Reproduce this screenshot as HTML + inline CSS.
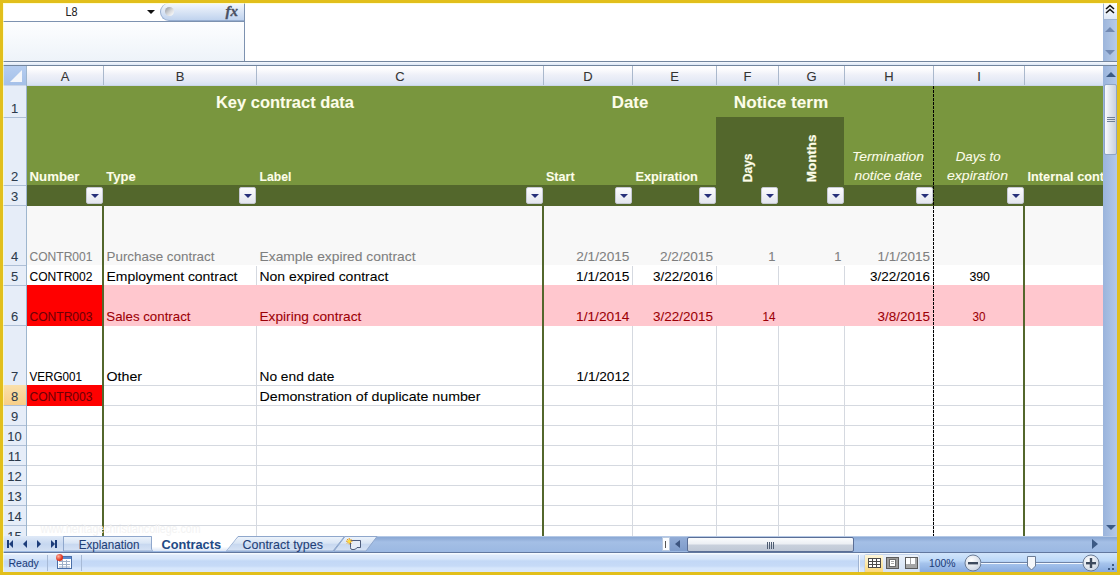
<!DOCTYPE html>
<html><head><meta charset="utf-8">
<style>
*{margin:0;padding:0;box-sizing:border-box}
html,body{width:1120px;height:575px;overflow:hidden;background:#e2bf1c;font-family:"Liberation Sans",sans-serif;position:relative}
.a{position:absolute}
.dd{position:absolute;width:17px;height:17px;border-radius:2px;background:linear-gradient(#fbfbfd,#e4e6ee);border:1px solid #c5c8d2}
.dd:after{content:"";position:absolute;left:4px;top:6px;border-left:4px solid transparent;border-right:4px solid transparent;border-top:4px solid #27307a}
</style></head><body>
<div class="a" style="left:3px;top:3px;width:1100px;height:58px;background:#fff"></div>
<div class="a" style="left:3px;top:22px;width:241px;height:39px;background:linear-gradient(#fdfeff,#eef3f9)"></div>
<div class="a" style="left:3px;top:21px;width:241px;height:1px;background:#7d92b0"></div>
<div class="a" style="left:244px;top:3px;width:1px;height:58px;background:#7d92b0"></div>
<div class="a" style="left:147px;top:10px;width:0;height:0;border-left:4px solid transparent;border-right:4px solid transparent;border-top:4px solid #111"></div>
<div class="a" style="left:160px;top:3px;width:84px;height:18px;border-radius:10px 0 0 10px;background:linear-gradient(#f5f8fd,#c0d3ee);border:1px solid #97aed0;border-right:none;border-top:none"></div>
<div class="a" style="left:165px;top:7px;width:9px;height:9px;border-radius:50%;background:linear-gradient(135deg,#9ca0a8 10%,#d8dadd 55%,#fafafa 90%)"></div>
<div class="a" style="left:1103px;top:3px;width:14px;height:58px;background:linear-gradient(90deg,#9db6dc,#b7cbe8)"></div>
<div class="a" style="left:1103px;top:3px;width:14px;height:17px;background:linear-gradient(#fdfeff,#dfe8f5);border-left:1px solid #9fb4d3;border-bottom:1px solid #9fb4d3"></div>
<div class="a" style="left:3px;top:61px;width:1114px;height:1px;background:#73869e"></div>
<div class="a" style="left:3px;top:62px;width:1114px;height:3px;background:linear-gradient(#f6f9fd,#dbe6f5)"></div>
<div class="a" style="left:3px;top:65px;width:1114px;height:1px;background:#73869e"></div>
<div class="a" style="left:3px;top:66px;width:1100px;height:20px;background:linear-gradient(#ffffff 0,#fdfdfe 3px,#eef0f8 9px,#e4e9f5 15px,#d6e1f2 19px)"></div>
<div class="a" style="left:3px;top:85px;width:1100px;height:1px;background:#cbd6e8"></div>
<div class="a" style="left:3px;top:66px;width:23px;height:19px;background:linear-gradient(#b5cdf0,#a5c0e8)"></div>
<div class="a" style="left:10px;top:70px;width:0;height:0;border-left:12px solid transparent;border-bottom:12px solid #f4f6fa"></div>
<div class="a" style="left:103px;top:66px;width:1px;height:19px;background:#aab8cc"></div>
<div class="a" style="left:256px;top:66px;width:1px;height:19px;background:#aab8cc"></div>
<div class="a" style="left:543px;top:66px;width:1px;height:19px;background:#aab8cc"></div>
<div class="a" style="left:632px;top:66px;width:1px;height:19px;background:#aab8cc"></div>
<div class="a" style="left:716px;top:66px;width:1px;height:19px;background:#aab8cc"></div>
<div class="a" style="left:778px;top:66px;width:1px;height:19px;background:#aab8cc"></div>
<div class="a" style="left:844px;top:66px;width:1px;height:19px;background:#aab8cc"></div>
<div class="a" style="left:933px;top:66px;width:1px;height:19px;background:#aab8cc"></div>
<div class="a" style="left:1024px;top:66px;width:1px;height:19px;background:#aab8cc"></div>
<div class="a" style="left:1103px;top:66px;width:1px;height:19px;background:#aab8cc"></div>
<div class="a" style="left:3px;top:86px;width:23px;height:450px;background:#e6edf8"></div>
<div class="a" style="left:26px;top:66px;width:1px;height:20px;background:#9eb6ce"></div>
<div class="a" style="left:26px;top:86px;width:1px;height:450px;background:#9eb6ce"></div>
<div class="a" style="left:3px;top:117px;width:23px;height:1px;background:#aebfd6"></div>
<div class="a" style="left:3px;top:185px;width:23px;height:1px;background:#aebfd6"></div>
<div class="a" style="left:3px;top:205px;width:23px;height:1px;background:#aebfd6"></div>
<div class="a" style="left:3px;top:265px;width:23px;height:1px;background:#aebfd6"></div>
<div class="a" style="left:3px;top:285px;width:23px;height:1px;background:#aebfd6"></div>
<div class="a" style="left:3px;top:325px;width:23px;height:1px;background:#aebfd6"></div>
<div class="a" style="left:3px;top:385px;width:23px;height:1px;background:#aebfd6"></div>
<div class="a" style="left:3px;top:385px;width:23px;height:20px;background:linear-gradient(#fae0ab,#f8cf88)"></div>
<div class="a" style="left:3px;top:405px;width:23px;height:1px;background:#aebfd6"></div>
<div class="a" style="left:3px;top:425px;width:23px;height:1px;background:#aebfd6"></div>
<div class="a" style="left:3px;top:445px;width:23px;height:1px;background:#aebfd6"></div>
<div class="a" style="left:3px;top:465px;width:23px;height:1px;background:#aebfd6"></div>
<div class="a" style="left:3px;top:485px;width:23px;height:1px;background:#aebfd6"></div>
<div class="a" style="left:3px;top:505px;width:23px;height:1px;background:#aebfd6"></div>
<div class="a" style="left:3px;top:525px;width:23px;height:1px;background:#aebfd6"></div>
<div class="a" style="left:3px;top:545px;width:23px;height:1px;background:#aebfd6"></div>
<div class="a" style="left:27px;top:86px;width:1076px;height:450px;background:#fff"></div>
<div class="a" style="left:256px;top:266px;width:1px;height:20px;background:#d5d9e0"></div>
<div class="a" style="left:256px;top:326px;width:1px;height:210px;background:#d5d9e0"></div>
<div class="a" style="left:632px;top:266px;width:1px;height:20px;background:#d5d9e0"></div>
<div class="a" style="left:632px;top:326px;width:1px;height:210px;background:#d5d9e0"></div>
<div class="a" style="left:716px;top:266px;width:1px;height:20px;background:#d5d9e0"></div>
<div class="a" style="left:716px;top:326px;width:1px;height:210px;background:#d5d9e0"></div>
<div class="a" style="left:778px;top:266px;width:1px;height:20px;background:#d5d9e0"></div>
<div class="a" style="left:778px;top:326px;width:1px;height:210px;background:#d5d9e0"></div>
<div class="a" style="left:844px;top:266px;width:1px;height:20px;background:#d5d9e0"></div>
<div class="a" style="left:844px;top:326px;width:1px;height:210px;background:#d5d9e0"></div>
<div class="a" style="left:933px;top:266px;width:1px;height:20px;background:#d5d9e0"></div>
<div class="a" style="left:933px;top:326px;width:1px;height:210px;background:#d5d9e0"></div>
<div class="a" style="left:27px;top:385px;width:1076px;height:1px;background:#d5d9e0"></div>
<div class="a" style="left:27px;top:405px;width:1076px;height:1px;background:#d5d9e0"></div>
<div class="a" style="left:27px;top:425px;width:1076px;height:1px;background:#d5d9e0"></div>
<div class="a" style="left:27px;top:445px;width:1076px;height:1px;background:#d5d9e0"></div>
<div class="a" style="left:27px;top:465px;width:1076px;height:1px;background:#d5d9e0"></div>
<div class="a" style="left:27px;top:485px;width:1076px;height:1px;background:#d5d9e0"></div>
<div class="a" style="left:27px;top:505px;width:1076px;height:1px;background:#d5d9e0"></div>
<div class="a" style="left:27px;top:525px;width:1076px;height:1px;background:#d5d9e0"></div>
<div class="a" style="left:27px;top:206px;width:1076px;height:59px;background:#f8f8f8"></div>
<div class="a" style="left:27px;top:285px;width:1076px;height:41px;background:#ffc7ce"></div>
<div class="a" style="left:27px;top:285px;width:76px;height:41px;background:#ff0000"></div>
<div class="a" style="left:27px;top:385px;width:76px;height:21px;background:#ff0000"></div>
<div class="a" style="left:102px;top:205px;width:2px;height:331px;background:#53672c"></div>
<div class="a" style="left:542px;top:205px;width:2px;height:331px;background:#53672c"></div>
<div class="a" style="left:1023px;top:205px;width:2px;height:331px;background:#53672c"></div>
<div class="a" style="left:27px;top:86px;width:1076px;height:100px;background:#79963e"></div>
<div class="a" style="left:27px;top:185px;width:1076px;height:21px;background:#53672c"></div>
<div class="a" style="left:716px;top:117px;width:128px;height:69px;background:#53672c"></div>
<div class="a" style="left:933px;top:86px;width:1px;height:450px;background:repeating-linear-gradient(#000 0,#000 3px,transparent 3px,transparent 4px)"></div>
<div class="dd" style="left:86px;top:187px"></div>
<div class="dd" style="left:239px;top:187px"></div>
<div class="dd" style="left:526px;top:187px"></div>
<div class="dd" style="left:615px;top:187px"></div>
<div class="dd" style="left:699px;top:187px"></div>
<div class="dd" style="left:761px;top:187px"></div>
<div class="dd" style="left:827px;top:187px"></div>
<div class="dd" style="left:916px;top:187px"></div>
<div class="dd" style="left:1007px;top:187px"></div>
<svg class="a" style="left:0;top:0" width="1120" height="575" font-family="Liberation Sans"><defs><clipPath id="cj"><rect x="0" y="0" width="1103" height="575"/></clipPath><radialGradient id="zg" cx="0.4" cy="0.35" r="0.7"><stop offset="0" stop-color="#ffffff"/><stop offset="1" stop-color="#c9d3e2"/></radialGradient></defs><text x="65.0" y="81" font-size="13" fill="#333" text-anchor="middle" font-weight="normal" font-style="normal" stroke="#333" stroke-width="0.08" >A</text>
<text x="180.0" y="81" font-size="13" fill="#333" text-anchor="middle" font-weight="normal" font-style="normal" stroke="#333" stroke-width="0.08" >B</text>
<text x="400.0" y="81" font-size="13" fill="#333" text-anchor="middle" font-weight="normal" font-style="normal" stroke="#333" stroke-width="0.08" >C</text>
<text x="588.0" y="81" font-size="13" fill="#333" text-anchor="middle" font-weight="normal" font-style="normal" stroke="#333" stroke-width="0.08" >D</text>
<text x="674.5" y="81" font-size="13" fill="#333" text-anchor="middle" font-weight="normal" font-style="normal" stroke="#333" stroke-width="0.08" >E</text>
<text x="747.5" y="81" font-size="13" fill="#333" text-anchor="middle" font-weight="normal" font-style="normal" stroke="#333" stroke-width="0.08" >F</text>
<text x="811.5" y="81" font-size="13" fill="#333" text-anchor="middle" font-weight="normal" font-style="normal" stroke="#333" stroke-width="0.08" >G</text>
<text x="889.0" y="81" font-size="13" fill="#333" text-anchor="middle" font-weight="normal" font-style="normal" stroke="#333" stroke-width="0.08" >H</text>
<text x="979.0" y="81" font-size="13" fill="#333" text-anchor="middle" font-weight="normal" font-style="normal" stroke="#333" stroke-width="0.08" >I</text>
<text x="14.5" y="113" font-size="13" fill="#2c3a4c" text-anchor="middle" font-weight="normal" font-style="normal" stroke="#2c3a4c" stroke-width="0.08" >1</text>
<text x="14.5" y="181" font-size="13" fill="#2c3a4c" text-anchor="middle" font-weight="normal" font-style="normal" stroke="#2c3a4c" stroke-width="0.08" >2</text>
<text x="14.5" y="201" font-size="13" fill="#2c3a4c" text-anchor="middle" font-weight="normal" font-style="normal" stroke="#2c3a4c" stroke-width="0.08" >3</text>
<text x="14.5" y="261" font-size="13" fill="#2c3a4c" text-anchor="middle" font-weight="normal" font-style="normal" stroke="#2c3a4c" stroke-width="0.08" >4</text>
<text x="14.5" y="281" font-size="13" fill="#2c3a4c" text-anchor="middle" font-weight="normal" font-style="normal" stroke="#2c3a4c" stroke-width="0.08" >5</text>
<text x="14.5" y="321" font-size="13" fill="#2c3a4c" text-anchor="middle" font-weight="normal" font-style="normal" stroke="#2c3a4c" stroke-width="0.08" >6</text>
<text x="14.5" y="381" font-size="13" fill="#2c3a4c" text-anchor="middle" font-weight="normal" font-style="normal" stroke="#2c3a4c" stroke-width="0.08" >7</text>
<text x="14.5" y="401" font-size="13" fill="#2c3a4c" text-anchor="middle" font-weight="normal" font-style="normal" stroke="#2c3a4c" stroke-width="0.08" >8</text>
<text x="14.5" y="421" font-size="13" fill="#2c3a4c" text-anchor="middle" font-weight="normal" font-style="normal" stroke="#2c3a4c" stroke-width="0.08" >9</text>
<text x="14.5" y="441" font-size="13" fill="#2c3a4c" text-anchor="middle" font-weight="normal" font-style="normal" stroke="#2c3a4c" stroke-width="0.08" >10</text>
<text x="14.5" y="461" font-size="13" fill="#2c3a4c" text-anchor="middle" font-weight="normal" font-style="normal" stroke="#2c3a4c" stroke-width="0.08" >11</text>
<text x="14.5" y="481" font-size="13" fill="#2c3a4c" text-anchor="middle" font-weight="normal" font-style="normal" stroke="#2c3a4c" stroke-width="0.08" >12</text>
<text x="14.5" y="501" font-size="13" fill="#2c3a4c" text-anchor="middle" font-weight="normal" font-style="normal" stroke="#2c3a4c" stroke-width="0.08" >13</text>
<text x="14.5" y="521" font-size="13" fill="#2c3a4c" text-anchor="middle" font-weight="normal" font-style="normal" stroke="#2c3a4c" stroke-width="0.08" >14</text>
<text x="14.5" y="541" font-size="13" fill="#2c3a4c" text-anchor="middle" font-weight="normal" font-style="normal" stroke="#2c3a4c" stroke-width="0.08" >15</text>
<text x="285" y="108" font-size="17" fill="#fdfde9" text-anchor="middle" font-weight="bold" font-style="normal" textLength="138" lengthAdjust="spacingAndGlyphs" stroke="#fdfde9" stroke-width="0.08" >Key contract data</text>
<text x="630" y="108" font-size="17" fill="#fdfde9" text-anchor="middle" font-weight="bold" font-style="normal" textLength="36.5" lengthAdjust="spacingAndGlyphs" stroke="#fdfde9" stroke-width="0.08" >Date</text>
<text x="781" y="108" font-size="17" fill="#fdfde9" text-anchor="middle" font-weight="bold" font-style="normal" textLength="94.5" lengthAdjust="spacingAndGlyphs" stroke="#fdfde9" stroke-width="0.08" >Notice term</text>
<text x="29.5" y="181" font-size="13" fill="#fdfde9" text-anchor="start" font-weight="bold" font-style="normal" textLength="50" lengthAdjust="spacingAndGlyphs" stroke="#fdfde9" stroke-width="0.08" >Number</text>
<text x="106.3" y="181" font-size="13" fill="#fdfde9" text-anchor="start" font-weight="bold" font-style="normal" textLength="29.3" lengthAdjust="spacingAndGlyphs" stroke="#fdfde9" stroke-width="0.08" >Type</text>
<text x="259.5" y="181" font-size="13" fill="#fdfde9" text-anchor="start" font-weight="bold" font-style="normal" textLength="31.8" lengthAdjust="spacingAndGlyphs" stroke="#fdfde9" stroke-width="0.08" >Label</text>
<text x="546" y="181" font-size="13" fill="#fdfde9" text-anchor="start" font-weight="bold" font-style="normal" textLength="28.6" lengthAdjust="spacingAndGlyphs" stroke="#fdfde9" stroke-width="0.08" >Start</text>
<text x="635.4" y="181" font-size="13" fill="#fdfde9" text-anchor="start" font-weight="bold" font-style="normal" textLength="62.5" lengthAdjust="spacingAndGlyphs" stroke="#fdfde9" stroke-width="0.08" >Expiration</text>
<text x="1027.5" y="181" font-size="13" fill="#fdfde9" text-anchor="start" font-weight="bold" font-style="normal" textLength="100" lengthAdjust="spacingAndGlyphs" stroke="#fdfde9" stroke-width="0.08" clip-path="url(#cj)">Internal contract</text>
<text transform="translate(752.4,182.2) rotate(-90)" font-size="13" font-weight="bold" fill="#fdfde9" textLength="28.7" lengthAdjust="spacingAndGlyphs" stroke="#fdfde9" stroke-width="0.25">Days</text>
<text transform="translate(816.3,182.2) rotate(-90)" font-size="13" font-weight="bold" fill="#fdfde9" textLength="47.6" lengthAdjust="spacingAndGlyphs" stroke="#fdfde9" stroke-width="0.25">Months</text>
<text x="888" y="161" font-size="13" fill="#fdfde9" text-anchor="middle" font-weight="normal" font-style="italic" textLength="72" lengthAdjust="spacingAndGlyphs" stroke="#fdfde9" stroke-width="0.08" >Termination</text>
<text x="888.2" y="180" font-size="13" fill="#fdfde9" text-anchor="middle" font-weight="normal" font-style="italic" textLength="67.2" lengthAdjust="spacingAndGlyphs" stroke="#fdfde9" stroke-width="0.08" >notice date</text>
<text x="978.2" y="161" font-size="13" fill="#fdfde9" text-anchor="middle" font-weight="normal" font-style="italic" textLength="45" lengthAdjust="spacingAndGlyphs" stroke="#fdfde9" stroke-width="0.08" >Days to</text>
<text x="977.5" y="180" font-size="13" fill="#fdfde9" text-anchor="middle" font-weight="normal" font-style="italic" textLength="61" lengthAdjust="spacingAndGlyphs" stroke="#fdfde9" stroke-width="0.08" >expiration</text>
<text x="29.5" y="261" font-size="13" fill="#7f7f7f" text-anchor="start" font-weight="normal" font-style="normal" textLength="63" lengthAdjust="spacingAndGlyphs" stroke="#7f7f7f" stroke-width="0.08" >CONTR001</text>
<text x="106.5" y="261" font-size="13" fill="#7f7f7f" text-anchor="start" font-weight="normal" font-style="normal" textLength="108" lengthAdjust="spacingAndGlyphs" stroke="#7f7f7f" stroke-width="0.08" >Purchase contract</text>
<text x="259.5" y="261" font-size="13" fill="#7f7f7f" text-anchor="start" font-weight="normal" font-style="normal" textLength="156" lengthAdjust="spacingAndGlyphs" stroke="#7f7f7f" stroke-width="0.08" >Example expired contract</text>
<text x="629.5" y="261" font-size="13" fill="#7f7f7f" text-anchor="end" font-weight="normal" font-style="normal" textLength="53.3" lengthAdjust="spacingAndGlyphs" stroke="#7f7f7f" stroke-width="0.08" >2/1/2015</text>
<text x="713" y="261" font-size="13" fill="#7f7f7f" text-anchor="end" font-weight="normal" font-style="normal" textLength="53" lengthAdjust="spacingAndGlyphs" stroke="#7f7f7f" stroke-width="0.08" >2/2/2015</text>
<text x="775.5" y="261" font-size="13" fill="#7f7f7f" text-anchor="end" font-weight="normal" font-style="normal" stroke="#7f7f7f" stroke-width="0.08" >1</text>
<text x="841.5" y="261" font-size="13" fill="#7f7f7f" text-anchor="end" font-weight="normal" font-style="normal" stroke="#7f7f7f" stroke-width="0.08" >1</text>
<text x="930" y="261" font-size="13" fill="#7f7f7f" text-anchor="end" font-weight="normal" font-style="normal" textLength="52.5" lengthAdjust="spacingAndGlyphs" stroke="#7f7f7f" stroke-width="0.08" >1/1/2015</text>
<text x="29.5" y="281" font-size="13" fill="#000" text-anchor="start" font-weight="normal" font-style="normal" textLength="63" lengthAdjust="spacingAndGlyphs" stroke="#000" stroke-width="0.08" >CONTR002</text>
<text x="106.5" y="281" font-size="13" fill="#000" text-anchor="start" font-weight="normal" font-style="normal" textLength="131" lengthAdjust="spacingAndGlyphs" stroke="#000" stroke-width="0.08" >Employment contract</text>
<text x="259.5" y="281" font-size="13" fill="#000" text-anchor="start" font-weight="normal" font-style="normal" textLength="128.8" lengthAdjust="spacingAndGlyphs" stroke="#000" stroke-width="0.08" >Non expired contract</text>
<text x="629.5" y="281" font-size="13" fill="#000" text-anchor="end" font-weight="normal" font-style="normal" textLength="53.5" lengthAdjust="spacingAndGlyphs" stroke="#000" stroke-width="0.08" >1/1/2015</text>
<text x="713" y="281" font-size="13" fill="#000" text-anchor="end" font-weight="normal" font-style="normal" textLength="60" lengthAdjust="spacingAndGlyphs" stroke="#000" stroke-width="0.08" >3/22/2016</text>
<text x="930" y="281" font-size="13" fill="#000" text-anchor="end" font-weight="normal" font-style="normal" textLength="60" lengthAdjust="spacingAndGlyphs" stroke="#000" stroke-width="0.08" >3/22/2016</text>
<text x="979.7" y="281" font-size="13" fill="#000" text-anchor="middle" font-weight="normal" font-style="normal" textLength="20.5" lengthAdjust="spacingAndGlyphs" stroke="#000" stroke-width="0.08" >390</text>
<text x="29.5" y="321" font-size="13" fill="#6e0008" text-anchor="start" font-weight="normal" font-style="normal" textLength="63" lengthAdjust="spacingAndGlyphs" stroke="#6e0008" stroke-width="0.08" >CONTR003</text>
<text x="106.3" y="321" font-size="13" fill="#9c0006" text-anchor="start" font-weight="normal" font-style="normal" textLength="84.2" lengthAdjust="spacingAndGlyphs" stroke="#9c0006" stroke-width="0.08" >Sales contract</text>
<text x="259.5" y="321" font-size="13" fill="#9c0006" text-anchor="start" font-weight="normal" font-style="normal" textLength="101.8" lengthAdjust="spacingAndGlyphs" stroke="#9c0006" stroke-width="0.08" >Expiring contract</text>
<text x="629.5" y="321" font-size="13" fill="#9c0006" text-anchor="end" font-weight="normal" font-style="normal" textLength="53.5" lengthAdjust="spacingAndGlyphs" stroke="#9c0006" stroke-width="0.08" >1/1/2014</text>
<text x="713" y="321" font-size="13" fill="#9c0006" text-anchor="end" font-weight="normal" font-style="normal" textLength="60" lengthAdjust="spacingAndGlyphs" stroke="#9c0006" stroke-width="0.08" >3/22/2015</text>
<text x="775.5" y="321" font-size="13" fill="#9c0006" text-anchor="end" font-weight="normal" font-style="normal" textLength="13" lengthAdjust="spacingAndGlyphs" stroke="#9c0006" stroke-width="0.08" >14</text>
<text x="930" y="321" font-size="13" fill="#9c0006" text-anchor="end" font-weight="normal" font-style="normal" textLength="52.5" lengthAdjust="spacingAndGlyphs" stroke="#9c0006" stroke-width="0.08" >3/8/2015</text>
<text x="979" y="321" font-size="13" fill="#9c0006" text-anchor="middle" font-weight="normal" font-style="normal" textLength="13" lengthAdjust="spacingAndGlyphs" stroke="#9c0006" stroke-width="0.08" >30</text>
<text x="29.5" y="381" font-size="13" fill="#000" text-anchor="start" font-weight="normal" font-style="normal" textLength="52.5" lengthAdjust="spacingAndGlyphs" stroke="#000" stroke-width="0.08" >VERG001</text>
<text x="106.5" y="381" font-size="13" fill="#000" text-anchor="start" font-weight="normal" font-style="normal" textLength="35.5" lengthAdjust="spacingAndGlyphs" stroke="#000" stroke-width="0.08" >Other</text>
<text x="259.5" y="381" font-size="13" fill="#000" text-anchor="start" font-weight="normal" font-style="normal" textLength="74.8" lengthAdjust="spacingAndGlyphs" stroke="#000" stroke-width="0.08" >No end date</text>
<text x="629.6" y="381" font-size="13" fill="#000" text-anchor="end" font-weight="normal" font-style="normal" textLength="53.1" lengthAdjust="spacingAndGlyphs" stroke="#000" stroke-width="0.08" >1/1/2012</text>
<text x="29.5" y="401" font-size="13" fill="#6e0008" text-anchor="start" font-weight="normal" font-style="normal" textLength="63" lengthAdjust="spacingAndGlyphs" stroke="#6e0008" stroke-width="0.08" >CONTR003</text>
<text x="259.5" y="401" font-size="13" fill="#000" text-anchor="start" font-weight="normal" font-style="normal" textLength="221" lengthAdjust="spacingAndGlyphs" stroke="#000" stroke-width="0.08" >Demonstration of duplicate number</text>
<text x="40.5" y="533" font-size="12" fill="#f3f3f3" textLength="160" lengthAdjust="spacingAndGlyphs">www.heritagechristiancollege.com</text></svg>
<div class="a" style="left:3px;top:536px;width:1114px;height:16px;background:linear-gradient(#dfe9f6 0,#8aa8d5 1px,#93afd9 3px,#a4bfe6 6px,#a0bce4 10px,#9bb8e2 16px)"></div>
<div class="a" style="left:3px;top:536px;width:60px;height:15px;background:linear-gradient(#dfe9f7,#c6d7f0 55%,#d3e0f3)"></div>
<div class="a" style="left:63px;top:536px;width:1px;height:15px;background:#9fb3d1"></div>
<div class="a" style="left:3px;top:552px;width:1114px;height:1px;background:#62789f"></div>
<div class="a" style="left:7px;top:540px;width:2px;height:8px;background:#1d3d7a"></div>
<div class="a" style="left:9px;top:540px;width:0;height:0;border-top:4px solid transparent;border-bottom:4px solid transparent;border-right:4px solid #1d3d7a"></div>
<div class="a" style="left:23px;top:540px;width:0;height:0;border-top:4px solid transparent;border-bottom:4px solid transparent;border-right:4px solid #1d3d7a"></div>
<div class="a" style="left:37px;top:540px;width:0;height:0;border-top:4px solid transparent;border-bottom:4px solid transparent;border-left:4px solid #1d3d7a"></div>
<div class="a" style="left:51px;top:540px;width:0;height:0;border-top:4px solid transparent;border-bottom:4px solid transparent;border-left:4px solid #1d3d7a"></div>
<div class="a" style="left:55px;top:540px;width:2px;height:8px;background:#1d3d7a"></div>
<div class="a" style="left:662px;top:537px;width:8px;height:14px;background:#fbfdff;border:1px solid #b9c9e0"></div>
<div class="a" style="left:665px;top:541px;width:1px;height:7px;background:#555"></div>
<div class="a" style="left:670px;top:537px;width:17px;height:14px;background:linear-gradient(#92acd6,#7f9ccb)"></div>
<div class="a" style="left:675px;top:540px;width:0;height:0;border-top:4.5px solid transparent;border-bottom:4.5px solid transparent;border-right:5px solid #3d5580"></div>
<div class="a" style="left:687px;top:537px;width:167px;height:15px;border-radius:2px;background:linear-gradient(#fbfcfd,#eceff4 45%,#c9d0dc 55%,#bfc8d6);border:1px solid #5a6e96"></div>
<div class="a" style="left:767px;top:542px;width:1px;height:7px;background:#4f5d72"></div>
<div class="a" style="left:769px;top:542px;width:1px;height:7px;background:#4f5d72"></div>
<div class="a" style="left:771px;top:542px;width:1px;height:7px;background:#4f5d72"></div>
<div class="a" style="left:773px;top:542px;width:1px;height:7px;background:#4f5d72"></div>
<div class="a" style="left:1092px;top:539px;width:0;height:0;border-top:5px solid transparent;border-bottom:5px solid transparent;border-left:6px solid #3c5a85"></div>
<div class="a" style="left:1103px;top:66px;width:14px;height:470px;background:linear-gradient(90deg,#9ab4dc,#b3c8e8)"></div>
<div class="a" style="left:1106px;top:72px;width:0;height:0;border-left:5px solid transparent;border-right:5px solid transparent;border-bottom:5px solid #3c5a85"></div>
<div class="a" style="left:1104px;top:84px;width:13px;height:71px;border-radius:2px;background:linear-gradient(90deg,#fafbfd,#dfe4ec 50%,#c9d1dd);border:1px solid #8ea4c4"></div>
<div class="a" style="left:1107px;top:117px;width:8px;height:1px;background:#6f7f97"></div>
<div class="a" style="left:1107px;top:119px;width:8px;height:1px;background:#6f7f97"></div>
<div class="a" style="left:1107px;top:121px;width:8px;height:1px;background:#6f7f97"></div>
<div class="a" style="left:1106px;top:525px;width:0;height:0;border-left:5px solid transparent;border-right:5px solid transparent;border-top:5px solid #3c5a85"></div>
<div class="a" style="left:1105px;top:27px;width:0;height:0;border-left:5px solid transparent;border-right:5px solid transparent;border-bottom:5px solid #7189b2"></div>
<div class="a" style="left:1105px;top:50px;width:0;height:0;border-left:5px solid transparent;border-right:5px solid transparent;border-top:5px solid #7189b2"></div>
<div class="a" style="left:3px;top:553px;width:1114px;height:19px;background:linear-gradient(#f5faff 0,#f5faff 1px,#deeafb 2px,#d6e5fa 6px,#c3d8f6 8px,#c6daf7 13px,#d6e6fb 15px,#d8e7fb 19px)"></div>
<div class="a" style="left:47px;top:555px;width:1px;height:16px;background:#a7bad6"></div>
<div class="a" style="left:81px;top:555px;width:1px;height:16px;background:#a7bad6"></div>
<div class="a" style="left:858px;top:555px;width:1px;height:16px;background:#a7bad6"></div>
<div class="a" style="left:57px;top:556px;width:15px;height:13px;background:#fff;border:1px solid #4a6fa8"></div>
<div class="a" style="left:58px;top:557px;width:13px;height:2px;background:#5b8bd0"></div>
<div class="a" style="left:56px;top:554px;width:7px;height:7px;border-radius:50%;background:radial-gradient(circle at 35% 35%,#ffb39e,#e0321c 60%,#b81c10)"></div>
<div class="a" style="left:920px;top:553px;width:197px;height:19px;background:linear-gradient(#d2e5fb,#bcd8f8 40%,#a5c3ec 55%,#88abdf)"></div>
<div class="a" style="left:858px;top:555px;width:1px;height:17px;background:#9fb3d1"></div>
<div class="a" style="left:859px;top:555px;width:1px;height:17px;background:#f4f8fd"></div>
<div class="a" style="left:864px;top:554px;width:56px;height:18px;border-radius:3px 3px 0 0;background:linear-gradient(#e9f0fa,#d3e1f4);border:1px solid #c3d3ea;border-bottom:none"></div>
<div class="a" style="left:865px;top:555px;width:18px;height:17px;background:linear-gradient(#fdf6dc,#fce6a2 60%,#f9d77f)"></div>
<div class="a" style="left:3px;top:3px;width:1px;height:569px;background:rgba(255,255,190,0.6)"></div>
<div class="a" style="left:3px;top:3px;width:1113px;height:1px;background:rgba(255,255,190,0.6)"></div>
<svg class="a" style="left:0;top:0" width="1120" height="575" font-family="Liberation Sans"><text x="65.5" y="16" font-size="13" fill="#222" text-anchor="start" font-weight="normal" font-style="normal" textLength="12" lengthAdjust="spacingAndGlyphs" stroke="#222" stroke-width="0.08" >L8</text>
<text x="225.5" y="15.5" font-family="Liberation Serif" font-size="15" font-style="italic" font-weight="bold" fill="#4a5163" stroke="#4a5163" stroke-width="0.3" textLength="12.5" lengthAdjust="spacingAndGlyphs">fx</text>
<defs><linearGradient id="tg" x1="0" y1="0" x2="0" y2="1"><stop offset="0" stop-color="#eef4fb"/><stop offset="0.45" stop-color="#d9e5f5"/><stop offset="0.55" stop-color="#c8d8f0"/><stop offset="1" stop-color="#d6e3f5"/></linearGradient><linearGradient id="ta" x1="0" y1="0" x2="0" y2="1"><stop offset="0" stop-color="#ffffff"/><stop offset="0.7" stop-color="#ffffff"/><stop offset="1" stop-color="#dbe6f6"/></linearGradient></defs>
<path d="M63.5,551 V536.5 H151.5 V549 L153,551 Z" fill="url(#tg)" stroke="#8fa7cc" stroke-width="1"/>
<path d="M226,551 L238,536.5 H344.5 L333,551 Z" fill="url(#tg)" stroke="#8fa7cc" stroke-width="1"/>
<path d="M334,551 L345,536.5 H377 L366,551 Z" fill="url(#tg)" stroke="#8fa7cc" stroke-width="1"/>
<path d="M152,536 V549 L153,551 H226 L238,536 Z" fill="url(#ta)"/>
<g><path d="M350.5,540.5 H360.5 V547.5 H357 Q356,549.5 354,549.5 H352 Q350.5,549.5 350.5,547.5 Z" fill="#e6edf8" stroke="#3d4d6e" stroke-width="0.9"/><path d="M347,539 l4.5,4.5 M351.5,539 l-4.5,4.5 M349.2,538 v6.5 M346,541.2 h6.5" stroke="#e89a10" stroke-width="1"/><circle cx="349.2" cy="541.2" r="1.5" fill="#ffe040"/></g>
<text x="78.7" y="548.7" font-size="13" fill="#1f3f78" text-anchor="start" font-weight="normal" font-style="normal" textLength="60.8" lengthAdjust="spacingAndGlyphs" stroke="#1f3f78" stroke-width="0.08" >Explanation</text>
<text x="161.6" y="548.7" font-size="13" fill="#1f4a86" text-anchor="start" font-weight="bold" font-style="normal" textLength="59.4" lengthAdjust="spacingAndGlyphs" stroke="#1f4a86" stroke-width="0.08" >Contracts</text>
<text x="242.5" y="548.7" font-size="13" fill="#1f3f78" text-anchor="start" font-weight="normal" font-style="normal" textLength="80.5" lengthAdjust="spacingAndGlyphs" stroke="#1f3f78" stroke-width="0.08" >Contract types</text>
<path d="M1106,9 L1110,5.5 L1114,9 M1106,13 L1110,9.5 L1114,13" fill="none" stroke="#111" stroke-width="1.6"/>
<text x="8.5" y="566.8" font-size="11.5" fill="#1d3d7a" text-anchor="start" font-weight="normal" font-style="normal" textLength="30.3" lengthAdjust="spacingAndGlyphs" stroke="#1d3d7a" stroke-width="0.08" >Ready</text>
<g stroke="#9fb0c8" stroke-width="1"><path d="M59,561.5H70M59,564.5H70M59,567H70M62.5,560V568M66.5,560V568"/></g>
<g><rect x="868.5" y="558.5" width="12" height="9" fill="#fff" stroke="#4a4a4a"/><path d="M868.5,561.5H880.5M868.5,564.5H880.5M872.5,558.5V567.5M876.5,558.5V567.5" stroke="#4a4a4a" fill="none"/></g>
<g><rect x="886.5" y="557.5" width="12" height="11" fill="#9a9a9a" stroke="#5a5a5a"/><rect x="889.5" y="559.5" width="6" height="7" fill="#fff" stroke="#6a6a6a"/><path d="M891,561.5h3M891,563.5h3" stroke="#aaa"/></g>
<g><rect x="905.5" y="557.5" width="12" height="11" fill="#a5a5a5" stroke="#5a5a5a"/><rect x="906" y="558" width="4" height="6" fill="#fff"/><rect x="911" y="558" width="4" height="6" fill="#fff"/></g>
<text x="929" y="567" font-size="11.5" fill="#1d3d7a" text-anchor="start" font-weight="normal" font-style="normal" textLength="26.6" lengthAdjust="spacingAndGlyphs" stroke="#1d3d7a" stroke-width="0.08" >100%</text>
<circle cx="973" cy="563" r="8" fill="url(#zg)" stroke="#6b7c96"/><rect x="968" y="562" width="10" height="2.4" fill="#3d4a5e"/>
<path d="M981,562.5H1083" stroke="#6f83a6" stroke-width="1"/><path d="M981,563.5H1083" stroke="#f2f8ff" stroke-width="1"/>
<path d="M1027.5,556.5 H1035.5 V566 L1031.5,570 L1027.5,566 Z" fill="#f4f6fa" stroke="#6b7c96"/>
<circle cx="1091" cy="563" r="8" fill="url(#zg)" stroke="#6b7c96"/><rect x="1086" y="562" width="10" height="2.4" fill="#3d4a5e"/><rect x="1089.8" y="558" width="2.4" height="10" fill="#3d4a5e"/>
<g fill="#3c5a85"><rect x="1112" y="564" width="2" height="2"/><rect x="1108" y="568" width="2" height="2"/><rect x="1112" y="568" width="2" height="2"/></g></svg>
</body></html>
